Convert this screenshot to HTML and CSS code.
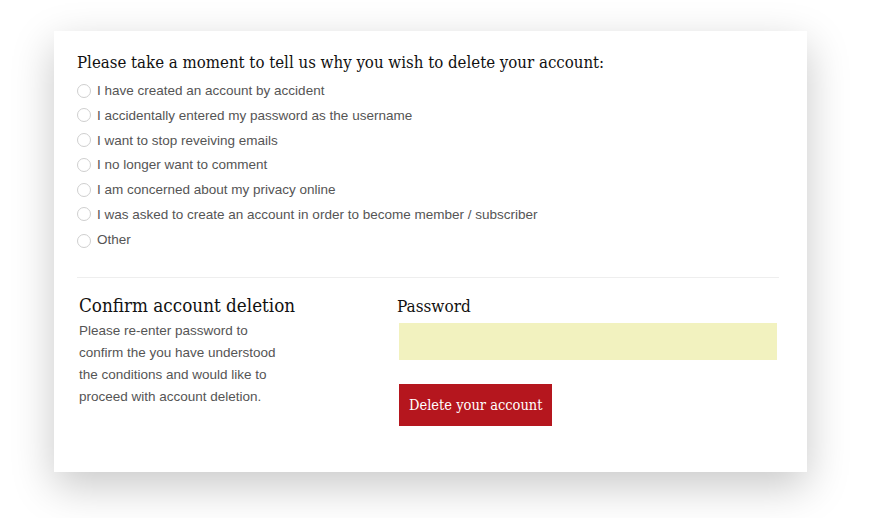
FILE: index.html
```html
<!DOCTYPE html>
<html lang="en">
<head>
    <meta charset="UTF-8">
    <meta name="viewport" content="width=device-width, initial-scale=1.0">
    <title>Delete account</title>
    <link rel="stylesheet" href="styles.css">
</head>
<body>
    <div class="card">
        <h2 class="question">Please take a moment to tell us why you wish to delete your account:</h2>
        <ul class="reasons">
            <li><label><input type="radio" name="reason"><span>I have created an account by accident</span></label></li>
            <li><label><input type="radio" name="reason"><span>I accidentally entered my password as the username</span></label></li>
            <li><label><input type="radio" name="reason"><span>I want to stop reveiving emails</span></label></li>
            <li><label><input type="radio" name="reason"><span>I no longer want to comment</span></label></li>
            <li><label><input type="radio" name="reason"><span>I am concerned about my privacy online</span></label></li>
            <li><label><input type="radio" name="reason"><span>I was asked to create an account in order to become member / subscriber</span></label></li>
            <li class="other"><label><input type="radio" name="reason"><span>Other</span></label></li>
        </ul>

        <hr class="divider">

        <div class="confirm">
            <div class="confirm-info">
                <h3>Confirm account deletion</h3>
                <p>Please re-enter password to confirm the you have understood the conditions and would like to proceed with account deletion.</p>
            </div>
            <div class="confirm-form">
                <label for="password" class="field-label">Password</label>
                <input id="password" type="password" class="password-input">
                <button class="delete-button">Delete your account</button>
            </div>
        </div>
    </div>
</body>
</html>
```

FILE: styles.css
```css
html, body {
    height: 100%;
}
body {
    margin: 0;
    padding: 31px 0 0 54px;
    box-sizing: border-box;
    background: #ffffff;
    font-family: "Liberation Sans", Arial, sans-serif;
}
.card {
    width: 753px;
    height: 441px;
    box-sizing: border-box;
    background: #ffffff;
    padding: 20px 28px 0 23px;
    box-shadow: 0 14px 40px rgba(0, 0, 0, 0.22);
}
.question {
    font-family: Georgia, "DejaVu Serif", serif;
    font-stretch: condensed;
    font-weight: normal;
    font-size: 16.7px;
    color: #111;
    margin: 0 0 10px;
    line-height: 22px;
}
.reasons {
    list-style: none;
    margin: 0;
    padding: 0;
}
.reasons li {
    height: 24.8px;
    font-size: 13.5px;
    color: #555;
}
.reasons label {
    display: flex;
    align-items: center;
    gap: 6px;
}
.reasons input {
    appearance: none;
    width: 14px;
    height: 14px;
    margin: 0;
    border: 1px solid #cfcfcf;
    border-radius: 50%;
    background: #fff;
}
.reasons .other input {
    position: relative;
    top: 2px;
}
.divider {
    border: none;
    border-top: 1px solid #eeeeee;
    margin: 20px 0 0;
}
.confirm {
    display: flex;
    padding: 16px 0 0 2px;
}
.confirm-info {
    width: 318px;
}
.confirm-info h3 {
    font-family: Georgia, "DejaVu Serif", serif;
    font-stretch: condensed;
    font-weight: normal;
    font-size: 18.7px;
    color: #111;
    margin: 0;
    line-height: 24px;
}
.confirm-info p {
    width: 205px;
    margin: 2px 0 0;
    font-size: 13.5px;
    line-height: 22px;
    color: #555;
}
.confirm-form {
    flex: 1;
    display: flex;
    flex-direction: column;
    align-items: flex-start;
}
.field-label {
    font-family: Georgia, "DejaVu Serif", serif;
    font-stretch: condensed;
    font-size: 17px;
    color: #111;
    line-height: 24px;
}
.password-input {
    width: 378px;
    height: 37px;
    box-sizing: border-box;
    margin: 5px 0 0 2px;
    border: none;
    background: #f2f2bf;
}
.delete-button {
    margin: 24px 0 0 2px;
    height: 42px;
    padding: 0 10px;
    border: none;
    background: #b5161e;
    color: #fff;
    font-family: Georgia, "DejaVu Serif", serif;
    font-stretch: condensed;
    font-size: 14.5px;
}
```
